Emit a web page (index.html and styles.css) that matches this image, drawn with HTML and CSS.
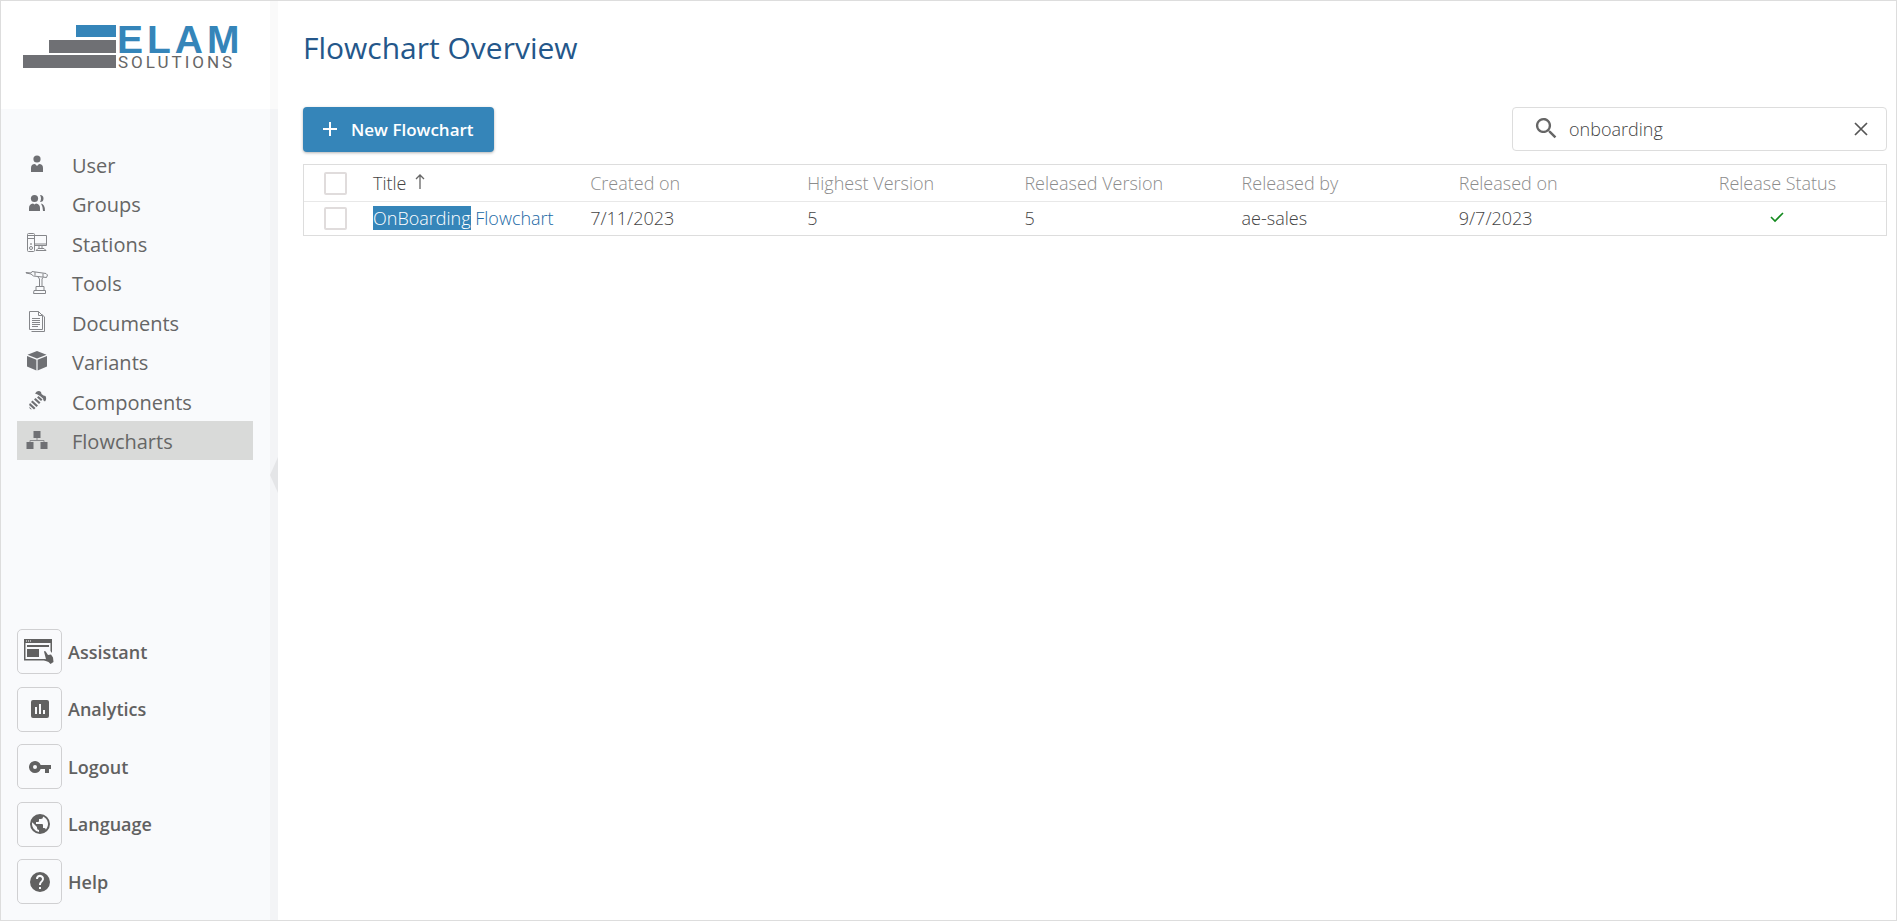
FILE: index.html
```html
<!DOCTYPE html>
<html lang="en">
<head>
    <meta charset="UTF-8">
    <meta name="viewport" content="width=device-width, initial-scale=1.0">
    <title>Flowchart Overview</title>
    <link rel="stylesheet" href="styles.css">
</head>
<body>
    <div class="app">
        <!-- Sidebar -->
        <aside class="sidebar">
            <div class="brand">
                <svg class="brand-steps" width="93" height="43" viewBox="0 0 93 43" aria-hidden="true">
                    <path fill="#3585b9" d="M53 0h40v12H53z"/>
                    <path fill="#6f7074" d="M26 15h67v13H26zM0 30h93v13H0z"/>
                </svg>
                <div class="brand-text">
                    <div class="brand-name">ELAM</div>
                    <div class="brand-sub">SOLUTIONS</div>
                </div>
            </div>

            <nav class="main-nav">
                <a class="nav-item" href="#">
                    <svg class="nav-icon" viewBox="0 0 24 24"><circle cx="12" cy="7" r="3.6"/><path d="M6 20v-4q0-4 4-4l2 2 2-2q4 0 4 4v4z"/></svg>
                    User
                </a>
                <a class="nav-item" href="#">
                    <svg class="nav-icon" viewBox="0 0 24 24"><circle cx="9.500" cy="7.500" r="3.600"/><path d="M4 20v-3q0-4 4-4.500l1.500 1 1.500-1q4 .5 4 4.500v3zM15 4q3.500 0 3.500 3.500T15 11q2-3.500 0-7M16 12.500q4 .5 4 7.500h-2q0-4-2-7.500"/></svg>
                    Groups
                </a>
                <a class="nav-item" href="#">
                    <svg class="nav-icon line" viewBox="0 0 24 24"><rect x="2.500" y="2.500" width="7" height="18" rx="1"/><path d="M3 4.500h6.500M3 7.500h6.500M9.500 4.500h12v10h-12M9.500 13h12M14 14.500v3M17 14.500v3M11 19.500l2-2h6l2 2z"/><circle cx="6" cy="13" r=".5"/><circle cx="6" cy="17" r="1.500"/></svg>
                    Stations
                </a>
                <a class="nav-item" href="#">
                    <svg class="nav-icon line" viewBox="0 0 24 24"><path d="M1 2.500l5 .5 1-1.500 14 2 1.500 1.500-1 2.500-13-1.500L6 4 1 3zM10 2v3.500M18 3.500v3.500M13 7l1.500 2v7M18 7.500L17 9v7M11 16.500h8v4h-8zM9 20.500h11.500v3H8.500z"/></svg>
                    Tools
                </a>
                <a class="nav-item" href="#">
                    <svg class="nav-icon line" viewBox="0 0 24 24"><path d="M4.500 1.500h9l4 4v14h-13zM13.500 1.500v4h4M16.500 4l3 3v14.500h-13M7 8.500h8M7 10.500h8M7 12.500h8M7 14.500h8M7 16.500h6"/></svg>
                    Documents
                </a>
                <a class="nav-item" href="#">
                    <svg class="nav-icon" viewBox="0 0 24 24"><path d="M12 2l9.500 3.800L12 9.500 2.500 5.800zM2 7l9.400 3.700V21.500L2 17.500zM22 7l-9.400 3.700V21.500L22 17.500z"/></svg>
                    Variants
                </a>
                <a class="nav-item" href="#">
                    <svg class="nav-icon" viewBox="0 0 24 24"><path d="M10 4.500q3-4 6-1.500l.5 2 2 1.500 2 .5q1.500 3-.5 5.500l-1.500-1-.5-2L15 7l-2.500-1.500zM13.500 7l4 3.500-1.500 1.500-4-3.500zM10.500 9l5 4.500-1.500 1.500-5-4.500zM7.500 11.500l5.500 5-1.500 1.500L6 13zM5 14l5.500 5L9 20.500 4 16zM4 17.500l3 3-2-.5z"/></svg>
                    Components
                </a>
                <a class="nav-item active" href="#">
                    <svg class="nav-icon" viewBox="0 0 24 24"><path d="M8.500 3h7v7h-7zM1.500 14h7v7h-7zM15.500 14h7v7h-7z"/><path fill="none" stroke="#8b8c8f" d="M12 10v2.500M5 14v-1.500h14V14"/></svg>
                    Flowcharts
                </a>
            </nav>

            <div class="tools">
                <button class="tool" type="button">
                    <span class="tool-box"><svg width="32" height="28" viewBox="0 0 32 28"><path d="M0 1h28v14l-1.500-2V5h-25v16H21l1 1.500H0z"/><path d="M3 7h22v2H3zM3 11h12v8H3z"/><path d="M20 13.500q1-1 2 .5l2 3 3-.5 2 3 .5 4.500-3 2-2-2-4-1.500-.5-1.500 2 .3z"/><path fill="#fff" d="M2 2.500h1v1H2zM4 2.500h1v1H4zM6 2.500h1v1H6z"/></svg></span>
                    Assistant
                </button>
                <button class="tool" type="button">
                    <span class="tool-box"><svg width="24" height="24" viewBox="0 0 24 24"><path d="M19 3H5a2 2 0 0 0-2 2v14a2 2 0 0 0 2 2h14a2 2 0 0 0 2-2V5a2 2 0 0 0-2-2zM9 17H7v-7h2zm4 0h-2V7h2zm4 0h-2v-4h2z"/></svg></span>
                    Analytics
                </button>
                <button class="tool" type="button">
                    <span class="tool-box"><svg width="24" height="24" viewBox="0 0 24 24"><path d="M12.650 10A6 6 0 1 0 7 18a6 6 0 0 0 5.650-4H17v4h4v-4h2v-4zM7 14a2 2 0 1 1 0-4 2 2 0 0 1 0 4z"/></svg></span>
                    Logout
                </button>
                <button class="tool" type="button">
                    <span class="tool-box"><svg width="24" height="24" viewBox="0 0 24 24"><path d="M12 2a10 10 0 1 0 0 20 10 10 0 0 0 0-20zm-1 17.930A8 8 0 0 1 4.210 10.210L9 15v1a2 2 0 0 0 2 2zm6.900-2.540A2 2 0 0 0 16 16h-1v-3a1 1 0 0 0-1-1H8v-2h2a1 1 0 0 0 1-1V7h2a2 2 0 0 0 2-2v-.41a8 8 0 0 1 2.900 12.800z"/></svg></span>
                    Language
                </button>
                <button class="tool" type="button">
                    <span class="tool-box"><svg width="24" height="24" viewBox="0 0 24 24"><path d="M12 2a10 10 0 1 0 0 20 10 10 0 0 0 0-20zm1 17h-2v-2h2zm2.070-7.750l-.9.920C13.450 12.900 13 13.500 13 15h-2v-.5c0-1.100.45-2.100 1.170-2.830l1.240-1.260A2 2 0 1 0 10 9H8a4 4 0 1 1 7.070 2.250z"/></svg></span>
                    Help
                </button>
            </div>
        </aside>

        <!-- Collapse handle -->
        <div class="splitter">
            <svg width="8" height="36" viewBox="0 0 8 36"><path fill="#e4e5e7" d="M8 0v36L0 18z"/></svg>
        </div>

        <main class="content">
            <h1>Flowchart Overview</h1>

            <div class="toolbar">
                <button class="new-button" type="button">
                    <svg width="14" height="14" viewBox="0 0 14 14"><path stroke="#fff" stroke-width="2" d="M7 0v14M0 7h14"/></svg>
                    New Flowchart
                </button>
                <div class="search">
                    <svg width="28" height="28" viewBox="0 0 24 24"><path fill="#666" d="M15 13.500h-.79l-.28-.27A6.500 6.500 0 1 0 13.230 13.930l.27.28v.79l5 4.990L19.990 18.500zm-6 0a4.500 4.500 0 1 1 0-9 4.500 4.500 0 0 1 0 9z"/></svg>
                    <input type="text" aria-label="Search" value="onboarding">
                    <button class="clear" type="button" aria-label="Clear search">
                        <svg width="14" height="14" viewBox="0 0 14 14"><path stroke="#555" stroke-width="1.700" d="M1 1l12 12M13 1L1 13"/></svg>
                    </button>
                </div>
            </div>

            <table class="grid">
                <thead>
                    <tr>
                        <th class="check"><input type="checkbox" aria-label="Select all"></th>
                        <th class="sorted">Title <svg width="10" height="16" viewBox="0 0 10 16"><path fill="none" stroke="#666" stroke-width="1.300" d="M5 15V1M1 5l4-4 4 4"/></svg></th>
                        <th>Created on</th>
                        <th>Highest Version</th>
                        <th>Released Version</th>
                        <th>Released by</th>
                        <th>Released on</th>
                        <th class="status">Release Status</th>
                    </tr>
                </thead>
                <tbody>
                    <tr>
                        <td class="check"><input type="checkbox" aria-label="Select OnBoarding Flowchart"></td>
                        <td><a href="#"><mark>OnBoarding</mark> Flowchart</a></td>
                        <td>7/11/2023</td>
                        <td>5</td>
                        <td>5</td>
                        <td>ae-sales</td>
                        <td>9/7/2023</td>
                        <td class="status"><svg width="14" height="12" viewBox="0 0 14 12"><path fill="none" stroke="#138a1e" stroke-width="1.600" d="M1 5l4 4 8-8"/></svg></td>
                    </tr>
                </tbody>
            </table>
        </main>
    </div>
</body>
</html>
```

FILE: styles.css
```css
/* General */
* {
    box-sizing: border-box;
}

body {
    margin: 0;
    font-family: "Open Sans", "Noto Sans", sans-serif;
    font-size: 18px;
    font-weight: 300;
    color: #444;
    background: #fff;
}

button,
input {
    font: inherit;
    color: inherit;
}

svg {
    flex: none;
}

.app {
    display: flex;
    min-height: 100vh;
    border: 1px solid #ddd;
}

/* Sidebar */
.sidebar {
    display: flex;
    flex-direction: column;
    flex: none;
    width: 269px;
    background: #f9fafc;
}

.brand {
    display: flex;
    gap: 1px;
    height: 108px;
    padding: 24px 22px;
    background: #fff;
}

.brand-name {
    font: bold 39px/30px "Liberation Sans", Arial, sans-serif;
    letter-spacing: 4px;
    color: #3585b9;
}

.brand-sub {
    padding-left: 1px;
    font: 17px/14px Roboto, sans-serif;
    letter-spacing: 3px;
    color: #666;
}

.main-nav {
    display: flex;
    flex-direction: column;
    min-height: 316px;
    margin: 35px 17px 0 16px;
}

.nav-item {
    display: flex;
    flex: 1;
    align-items: center;
    gap: 23px;
    padding: 4px 0 0 8px;
    font-size: 20px;
    font-weight: 400;
    line-height: 28px;
    color: #666;
    text-decoration: none;
}

.nav-item.active {
    background: #d9dad9;
}

.nav-icon {
    width: 24px;
    height: 24px;
    margin-bottom: 4px;
    fill: #6f7074;
}

.nav-icon.line {
    fill: none;
    stroke: #85868a;
}

.tools {
    display: flex;
    flex-direction: column;
    justify-content: space-between;
    min-height: 275px;
    margin: auto 16px 16px;
}

.tool {
    display: flex;
    align-items: center;
    gap: 6px;
    padding: 0;
    border: none;
    background: none;
    font-weight: 600;
    color: #616161;
    cursor: pointer;
}

.tool-box {
    display: flex;
    align-items: center;
    justify-content: center;
    width: 45px;
    height: 45px;
    border: 1px solid #d0d0d2;
    border-radius: 5px;
    fill: #616161;
}

.splitter {
    display: flex;
    flex: none;
    flex-direction: column;
    width: 8px;
    padding-top: 456px;
    background: linear-gradient(#fafafa 108px, #f3f4f6 108px);
}

/* Main content */
.content {
    flex: 1;
    min-width: 0;
    padding: 23px 9px 24px 25px;
}

h1 {
    margin: 0;
    font-size: 30px;
    font-weight: 400;
    line-height: 48px;
    color: #24578a;
}

.toolbar {
    display: flex;
    justify-content: space-between;
    align-items: flex-start;
    margin: 35px 0 12px;
}

.new-button {
    display: flex;
    align-items: center;
    gap: 14px;
    height: 45px;
    padding: 0 20px 1px;
    border: none;
    border-radius: 4px;
    background: #3585b9;
    box-shadow: 0 1px 3px rgba(0, 0, 0, 0.3);
    font-size: 17px;
    font-weight: 600;
    color: #fff;
    cursor: pointer;
}

.search {
    display: flex;
    align-items: center;
    width: 375px;
    height: 44px;
    padding: 0 18px 0 20px;
    border: 1px solid #ddd;
    border-radius: 4px;
}

.search input {
    flex: 1;
    min-width: 0;
    padding: 0 8px;
    border: none;
    outline: none;
    background: none;
}

.clear {
    display: flex;
    padding: 0;
    border: none;
    background: none;
    cursor: pointer;
}

/* Table */
.grid {
    width: 100%;
    table-layout: fixed;
    border: 1px solid #ddd;
    border-spacing: 0;
    line-height: 24px;
}

.grid th,
.grid td {
    padding: 4px 7px;
    text-align: left;
    white-space: nowrap;
}

.grid th {
    height: 37px;
    border-bottom: 1px solid #e8e8e8;
    font-weight: 300;
    color: #8c8c8c;
}

.grid td {
    height: 33px;
    padding: 3px 7px 5px;
}

.grid .check {
    width: 62px;
    padding: 0 0 0 20px;
}

.grid .sorted {
    color: #444;
}

.sorted svg {
    margin-left: 4px;
}

.grid .status {
    text-align: center;
}

.status svg {
    display: block;
    margin: 0 auto;
}

.grid a {
    color: #2068a4;
    text-decoration: none;
}

.grid mark {
    background: #3585b9;
    color: #fff;
}

.grid input {
    display: block;
    appearance: none;
    width: 23px;
    height: 23px;
    margin: 0;
    border: 2px solid #e0dcdc;
    border-radius: 2px;
    background: #fff;
}
```
